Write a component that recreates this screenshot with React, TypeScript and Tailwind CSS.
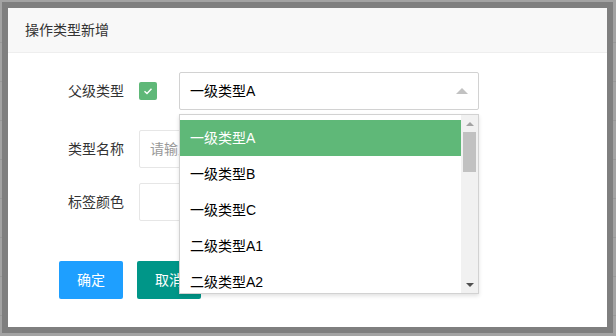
import React from 'react';

const font = "font-['Liberation_Sans','Noto_Sans_CJK_SC',sans-serif]";

const options = ['一级类型A', '一级类型B', '一级类型C', '二级类型A1', '二级类型A2'];

function Label({ text }: { text: string }) {
  return <div className="w-[116px] text-right text-[14px] text-[#333]">{text}</div>;
}

export default function App() {
  return (
    <div className={`relative w-[616px] h-[336px] overflow-hidden bg-[#a3a3a3] ${font}`}>
      {/* page behind the overlay */}
      <div className="flex flex-col pt-[4px]">
        {Array.from({ length: 8 }).map((_, i) => (
          <div key={i} className="h-[39px] border-b border-[#989898]" />
        ))}
      </div>

      {/* dialog */}
      <div className="absolute left-[2px] top-[2px] w-[611px] h-[331px] border-[6px] border-[#7f7f7f] bg-white">
        <div className="h-[45px] bg-[#f8f8f8] border-b border-[#eeeeee] pl-[17px] leading-[44px] text-[14px] text-[#333]">
          操作类型新增
        </div>

        <div className="flex flex-col">
          <div className="mt-[19px] flex items-center h-[38px]">
            <Label text="父级类型" />
            <div className="ml-[15px] w-[18px] h-[18px] rounded-[2px] bg-[#5fb878] flex items-center justify-center">
              <svg width="12" height="12" viewBox="0 0 12 12">
                <polyline points="2.5,6.2 5,8.5 9.5,3.8" fill="none" stroke="#fff" strokeWidth="1.4" />
              </svg>
            </div>
            <div className="ml-[22px] w-[300px] h-[38px] border border-[#d2d2d2] rounded-[2px] flex items-center justify-between pl-[10px] pr-[10px]">
              <span className="text-[14px] text-[#000]">一级类型A</span>
              <svg width="12" height="6" viewBox="0 0 12 6">
                <polygon points="0,6 12,6 6,0" fill="#c2c2c2" />
              </svg>
            </div>
          </div>

          <div className="mt-[20px] flex items-center h-[38px]">
            <Label text="类型名称" />
            <div className="ml-[15px] w-[340px] h-[38px] border border-[#e6e6e6] rounded-[2px] flex items-center pl-[10px]">
              <span className="text-[14px] text-[#999]">请输入类型名称</span>
            </div>
          </div>

          <div className="mt-[15px] flex items-center h-[38px]">
            <Label text="标签颜色" />
            <div className="ml-[15px] w-[340px] h-[38px] border border-[#e6e6e6] rounded-[2px]" />
          </div>

          <div className="mt-[40px] ml-[51px] flex gap-[14px]">
            <button className="w-[64px] h-[38px] rounded-[2px] bg-[#1e9fff] text-white text-[14px]">确定</button>
            <button className="w-[64px] h-[38px] rounded-[2px] bg-[#009688] text-white text-[14px]">取消</button>
          </div>
        </div>
      </div>

      {/* open dropdown */}
      <div className="absolute left-[179px] top-[114px] w-[300px] h-[180px] border border-[#d2d2d2] bg-white shadow-[0_2px_4px_rgba(0,0,0,0.12)] flex">
        <div className="flex-1 pt-[5px] flex flex-col">
          {options.map((o, i) => (
            <div
              key={o}
              className={`h-[36px] leading-[36px] pl-[10px] text-[14px] ${i === 0 ? 'bg-[#5fb878] text-white' : 'text-[#000]'}`}
            >
              {o}
            </div>
          ))}
        </div>
        <div className="w-[17px] bg-[#f1f1f1] flex flex-col items-center">
          <div className="h-[17px] flex items-center justify-center">
            <svg width="8" height="4" viewBox="0 0 8 4">
              <polygon points="0,4 8,4 4,0" fill="#a3a3a3" />
            </svg>
          </div>
          <div className="w-[13px] h-[40px] bg-[#c1c1c1]" />
          <div className="flex-1" />
          <div className="h-[17px] flex items-center justify-center">
            <svg width="8" height="4" viewBox="0 0 8 4">
              <polygon points="0,0 8,0 4,4" fill="#505050" />
            </svg>
          </div>
        </div>
      </div>
    </div>
  );
}
